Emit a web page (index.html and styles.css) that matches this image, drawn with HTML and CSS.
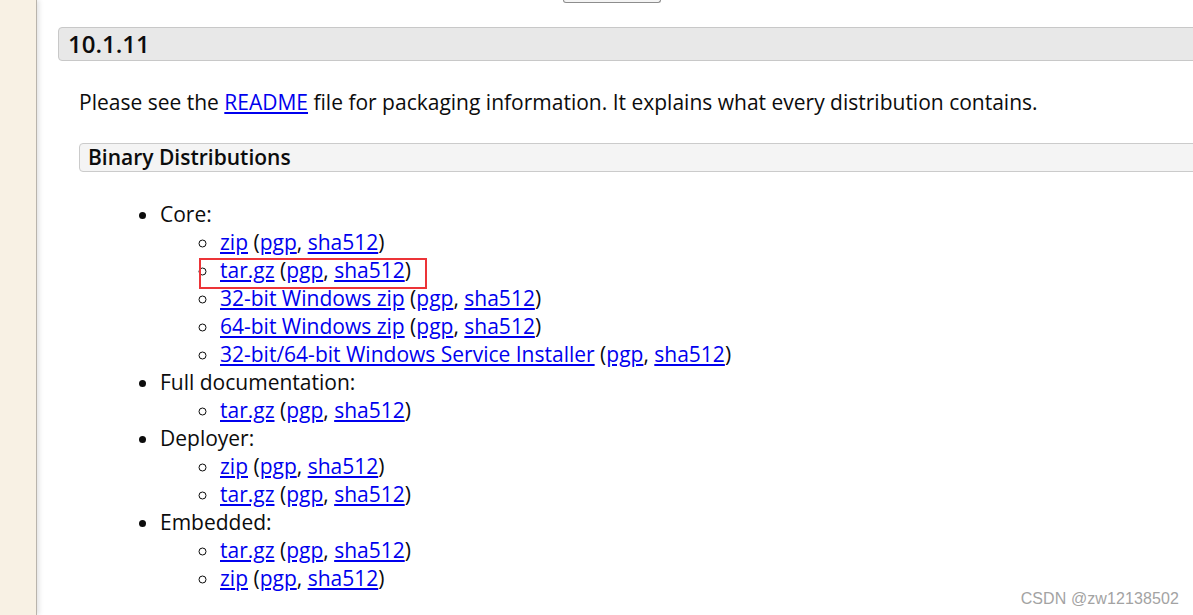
FILE: index.html
```html
<!DOCTYPE html>
<html lang="en">
<head>
    <meta charset="UTF-8">
    <title>Apache Tomcat 10 Downloads</title>
    <link rel="stylesheet" href="styles.css">
</head>
<body>
    <div class="page">
        <!-- 左のサイドバー -->
        <div class="sidebar"></div>

        <div class="content">
            <div class="top-button"></div>

            <h3 class="version-title">10.1.11</h3>

            <div class="release">
                <p class="intro">Please see the <a href="#">README</a> file for packaging information. It explains what every distribution contains.</p>

                <h4 class="section-title">Binary Distributions</h4>

                <ul class="dist-list">
                    <li>Core:
                        <ul>
                            <li><a href="#">zip</a> (<a href="#">pgp</a>, <a href="#">sha512</a>)</li>
                            <li><span class="marked"><a href="#">tar.gz</a> (<a href="#">pgp</a>, <a href="#">sha512</a>)</span></li>
                            <li><a href="#">32-bit Windows zip</a> (<a href="#">pgp</a>, <a href="#">sha512</a>)</li>
                            <li><a href="#">64-bit Windows zip</a> (<a href="#">pgp</a>, <a href="#">sha512</a>)</li>
                            <li><a href="#">32-bit/64-bit Windows Service Installer</a> (<a href="#">pgp</a>, <a href="#">sha512</a>)</li>
                        </ul>
                    </li>
                    <li>Full documentation:
                        <ul>
                            <li><a href="#">tar.gz</a> (<a href="#">pgp</a>, <a href="#">sha512</a>)</li>
                        </ul>
                    </li>
                    <li>Deployer:
                        <ul>
                            <li><a href="#">zip</a> (<a href="#">pgp</a>, <a href="#">sha512</a>)</li>
                            <li><a href="#">tar.gz</a> (<a href="#">pgp</a>, <a href="#">sha512</a>)</li>
                        </ul>
                    </li>
                    <li>Embedded:
                        <ul>
                            <li><a href="#">tar.gz</a> (<a href="#">pgp</a>, <a href="#">sha512</a>)</li>
                            <li><a href="#">zip</a> (<a href="#">pgp</a>, <a href="#">sha512</a>)</li>
                        </ul>
                    </li>
                </ul>
            </div>
        </div>
    </div>

    <div class="watermark">CSDN @zw12138502</div>
</body>
</html>
```

FILE: styles.css
```css
/* ページ全体 */
* {
    margin: 0;
    padding: 0;
    box-sizing: border-box;
}

html, body {
    height: 100%;
    overflow: hidden;
}

body {
    font-family: "Open Sans", "Noto Sans", sans-serif;
    font-size: 21px;
    color: #0c0c0c;
    background-color: #fff;
}

.page {
    display: flex;
    height: 100%;
}

/* サイドバー */
.sidebar {
    width: 37px;
    flex-shrink: 0;
    background-color: #f8f1e4;
    border-right: 1px solid #b9b4ac;
    box-shadow: 2px 0 5px rgba(0, 0, 0, 0.12);
    position: relative;
    z-index: 1;
}

.content {
    flex: 1;
    min-width: 0;
    margin-right: -20px;
    overflow: hidden;
}

/* 上部のボタンの端 */
.top-button {
    width: 98px;
    height: 3px;
    margin-left: 526px;
    border: 1px solid #8d8d8d;
    border-top: none;
    border-radius: 0 0 4px 4px;
    background-color: #f4f4f4;
}

/* バージョン見出し */
.version-title {
    margin: 24px 0 0 21px;
    height: 34px;
    padding-left: 9px;
    font-size: 24px;
    font-weight: 600;
    line-height: 32px;
    background-color: #e8e8e8;
    border: 1px solid #c8c8c8;
    border-radius: 4px;
}

.release {
    padding-left: 42px;
}

.intro {
    margin-top: 27px;
    line-height: 28px;
}

a {
    color: #0000ee;
    text-decoration: underline;
    text-underline-offset: 2px;
}

/* セクション見出し */
.section-title {
    margin-top: 27px;
    height: 29px;
    padding-left: 8px;
    font-size: 21px;
    font-weight: 600;
    line-height: 27px;
    background-color: #f4f4f4;
    border: 1px solid #cbcbcb;
    border-radius: 4px;
}

/* ダウンロード一覧 */
.dist-list {
    margin-top: 28px;
    padding-left: 81px;
    line-height: 28px;
    list-style: disc;
}

.dist-list ul {
    padding-left: 60px;
    list-style: circle;
}

/* 赤枠 */
.marked {
    position: relative;
}

.marked::after {
    content: '';
    position: absolute;
    left: -21px;
    top: 2px;
    width: 224px;
    height: 27px;
    border: 2px solid #ec3438;
    pointer-events: none;
}

/* 透かし */
.watermark {
    position: absolute;
    right: 14px;
    bottom: 7px;
    font-family: "Liberation Sans", Arial, sans-serif;
    font-size: 16px;
    color: #a3a3a3;
    letter-spacing: 0.1px;
}
```
